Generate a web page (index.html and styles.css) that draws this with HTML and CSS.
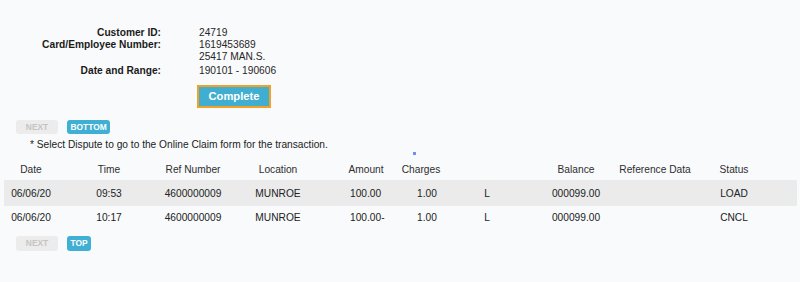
FILE: index.html
```html
<!DOCTYPE html>
<html>
<head>
<meta charset="utf-8">
<link rel="stylesheet" href="styles.css">
</head>
<body>
<div class="page">
  <div class="info">
    <div class="lbl">Customer ID:</div><div class="val">24719</div>
    <div class="lbl">Card/Employee Number:</div><div class="val">1619453689<br>25417 MAN.S.</div>
    <div class="lbl gap">Date and Range:</div><div class="val gap">190101 - 190606</div>
  </div>
  <div class="complete-row"><button class="complete">Complete</button></div>
  <div class="pager pager-top">
    <span class="btn btn-off">NEXT</span>
    <span class="btn btn-on">BOTTOM</span>
  </div>
  <p class="note">* Select Dispute to go to the Online Claim form for the transaction.</p>
  <div class="table">
    <div class="row head">
      <span class="sort-dot"></span>
      <div class="cell">Date</div>
      <div class="cell">Time</div>
      <div class="cell">Ref Number</div>
      <div class="cell">Location</div>
      <div class="cell">Amount</div>
      <div class="cell charges-h">Charges</div>
      <div class="cell"></div>
      <div class="cell">Balance</div>
      <div class="cell">Reference Data</div>
      <div class="cell">Status</div>
      <div class="cell"></div>
    </div>
    <div class="row stripe">
      <div class="cell">06/06/20</div>
      <div class="cell">09:53</div>
      <div class="cell">4600000009</div>
      <div class="cell">MUNROE</div>
      <div class="cell amount">100.00</div>
      <div class="cell charges">1.00</div>
      <div class="cell">L</div>
      <div class="cell">000099.00</div>
      <div class="cell"></div>
      <div class="cell">LOAD</div>
      <div class="cell"></div>
    </div>
    <div class="row plain">
      <div class="cell">06/06/20</div>
      <div class="cell">10:17</div>
      <div class="cell">4600000009</div>
      <div class="cell">MUNROE</div>
      <div class="cell amount">100.00-</div>
      <div class="cell charges">1.00</div>
      <div class="cell">L</div>
      <div class="cell">000099.00</div>
      <div class="cell"></div>
      <div class="cell">CNCL</div>
      <div class="cell"></div>
    </div>
  </div>
  <div class="pager pager-bottom">
    <span class="btn btn-off">NEXT</span>
    <span class="btn btn-on">TOP</span>
  </div>
</div>
</body>
</html>
```
FILE: styles.css
```css
html, body {
  margin: 0;
  padding: 0;
  background: #f9fafc;
}
body {
  font-family: "Liberation Sans", Arial, sans-serif;
  font-size: 10.2px;
  line-height: 12px;
  color: #222222;
  width: 800px;
  height: 282px;
  overflow: hidden;
}
.page {
  padding: 27px 3px 0 4px;
}
.info {
  display: grid;
  grid-template-columns: 157px auto;
  column-gap: 38px;
  justify-content: start;
}
.lbl {
  text-align: right;
  font-weight: bold;
  color: #1a1a1a;
}
.val {
  color: #262626;
}
.gap {
  margin-top: 2px;
}
.complete-row {
  margin-top: 8px;
  padding-left: 193px;
}
.complete {
  box-sizing: border-box;
  width: 74px;
  height: 23px;
  margin: 0;
  padding: 0;
  border: 2px solid #f4a024;
  background: #40aed0;
  color: #ffffff;
  font-family: "Liberation Sans", Arial, sans-serif;
  font-weight: bold;
  font-size: 11.2px;
  line-height: 19px;
  display: block;
}
.pager {
  display: flex;
  gap: 9px;
  padding-left: 12px;
}
.pager-top {
  margin-top: 12px;
}
.pager-bottom {
  margin-top: 6px;
}
.btn {
  box-sizing: border-box;
  height: 14px;
  line-height: 14px;
  font-size: 8.4px;
  font-weight: bold;
  border-radius: 3px;
  text-align: center;
}
.pager-bottom .btn {
  height: 15px;
  line-height: 15px;
}
.btn-off {
  width: 42px;
  background: #ececec;
  color: #c4c4c4;
}
.btn-on {
  padding: 0 3.5px;
  background: #3fb0d3;
  color: #ffffff;
}
.note {
  margin: 5px 0 0 0;
  padding-left: 26px;
  color: #222222;
}
.table {
  margin-top: 5px;
  width: 793px;
}
.row {
  display: grid;
  grid-template-columns: 54px 102px 66px 104px 72px 44px 82px 96px 62px 96px 1fr;
  white-space: nowrap;
}
.head {
  position: relative;
  padding: 8px 0 4px;
  color: #2e2e2e;
}
.stripe {
  background: #ebebeb;
  padding: 8px 0 6px;
}
.plain {
  padding: 6px 0 6px;
}
.cell {
  display: flex;
  justify-content: center;
  min-width: 0;
}
.charges-h {
  padding-right: 6px;
}
.charges {
  padding-left: 6px;
}
.amount {
  justify-content: flex-start;
  padding-left: 20px;
}
.sort-dot {
  position: absolute;
  left: 409px;
  top: -4px;
  width: 3px;
  height: 3px;
  background: #6f8ff5;
}
```
